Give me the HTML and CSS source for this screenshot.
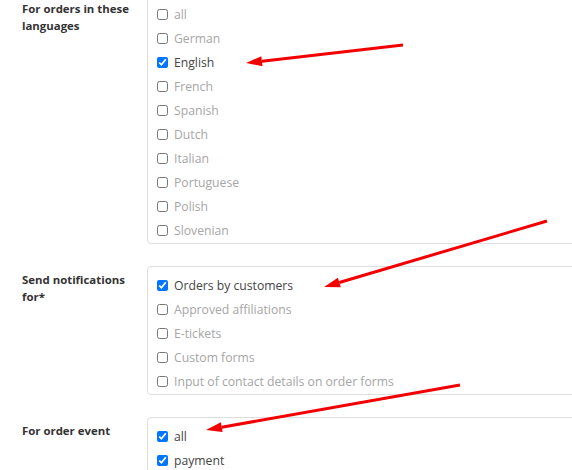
FILE: index.html
```html
<!DOCTYPE html>
<html>
<head>
<meta charset="utf-8">
<link rel="stylesheet" href="styles.css">
</head>
<body>
<div class="form">
  <div class="row first">
    <div class="label">For orders in these languages</div>
    <div class="box">
      <label class="opt"><input type="checkbox"><span>all</span></label>
      <label class="opt"><input type="checkbox"><span>German</span></label>
      <label class="opt on"><input type="checkbox" checked><span>English</span></label>
      <label class="opt"><input type="checkbox"><span>French</span></label>
      <label class="opt"><input type="checkbox"><span>Spanish</span></label>
      <label class="opt"><input type="checkbox"><span>Dutch</span></label>
      <label class="opt"><input type="checkbox"><span>Italian</span></label>
      <label class="opt"><input type="checkbox"><span>Portuguese</span></label>
      <label class="opt"><input type="checkbox"><span>Polish</span></label>
      <label class="opt"><input type="checkbox"><span>Slovenian</span></label>
    </div>
  </div>
  <div class="row">
    <div class="label">Send notifications for*</div>
    <div class="box">
      <label class="opt on"><input type="checkbox" checked><span>Orders by customers</span></label>
      <label class="opt"><input type="checkbox"><span>Approved affiliations</span></label>
      <label class="opt"><input type="checkbox"><span>E-tickets</span></label>
      <label class="opt"><input type="checkbox"><span>Custom forms</span></label>
      <label class="opt"><input type="checkbox"><span>Input of contact details on order forms</span></label>
    </div>
  </div>
  <div class="row">
    <div class="label">For order event</div>
    <div class="box">
      <label class="opt on"><input type="checkbox" checked><span>all</span></label>
      <label class="opt on"><input type="checkbox" checked><span>payment</span></label>
    </div>
  </div>
</div>
<svg class="arrows" width="572" height="470" viewBox="0 0 572 470">
  <g stroke="#f20000" stroke-width="3" fill="#f20000">
    <line x1="403" y1="45" x2="262" y2="61.2"/>
    <polygon stroke="none" points="246,63 262.5,66.2 261.3,56.2"/>
    <line x1="547" y1="221" x2="339.3" y2="282.5"/>
    <polygon stroke="none" points="324,287 340.8,287.3 337.9,277.7"/>
    <line x1="460" y1="385" x2="221.7" y2="427.2"/>
    <polygon stroke="none" points="206,430 222.6,432.1 220.9,422.3"/>
  </g>
</svg>
</body>
</html>
```

FILE: styles.css
```css
html, body {
  margin: 0;
  padding: 0;
  background: #fff;
  overflow: hidden;
  width: 572px;
  height: 470px;
  position: relative;
}

.form {
  width: 760px;
  padding-left: 22px;
  display: flex;
  flex-direction: column;
  gap: 22px;
  font-family: "Open Sans", "Noto Sans", "Liberation Sans", sans-serif;
}

.row {
  display: flex;
  align-items: flex-start;
}

.row.first {
  margin-top: -5px;
}

.label {
  width: 125px;
  flex: none;
  box-sizing: border-box;
  padding-top: 5px;
  padding-right: 0;
  font-size: 11.4px;
  font-weight: 700;
  line-height: 17px;
  color: #333;
}

.box {
  flex: 1;
  border: 1px solid #dedede;
  border-radius: 4px;
  padding: 6px 10px 1px 9px;
  display: flex;
  flex-direction: column;
}

.opt {
  display: flex;
  align-items: center;
  gap: 6px;
  height: 24px;
  font-size: 12.2px;
  color: #a6a6a6;
}

.opt.on {
  color: #444;
}

.opt input {
  width: 11px;
  height: 11px;
  margin: 0;
  flex: none;
}

.arrows {
  position: absolute;
  left: 0;
  top: 0;
  pointer-events: none;
}
```
